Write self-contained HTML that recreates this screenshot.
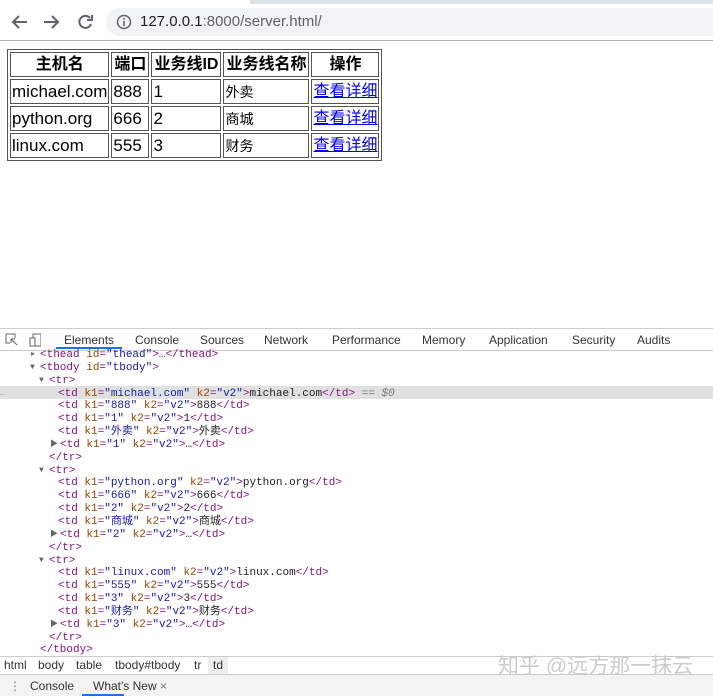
<!DOCTYPE html>
<html><head><meta charset="utf-8"><style>
*{margin:0;padding:0;box-sizing:border-box}
body{width:713px;height:696px;overflow:hidden;background:#fff;font-family:"Liberation Sans","Noto Sans CJK SC",sans-serif;position:relative}
.abs{position:absolute}
table{position:absolute;left:7px;top:49px;border:1px solid #555;border-spacing:2px;font-size:17px;color:#000}
td,th{border:1px solid #555;padding:0 1px;height:25px;white-space:nowrap;line-height:20px}
th{font-weight:bold;text-align:center;font-size:16px;padding:0 2px}
a{color:#0000ee;text-decoration:underline;font-size:16px}
.cj{font-size:14px}
.code{position:absolute;left:0;top:349px;width:713px;font-family:"Liberation Mono","Noto Sans CJK SC",monospace;font-size:11px;line-height:12.85px;color:#881280}
.code div{white-space:pre;height:12.85px;position:relative}
.n{color:#994500}.v{color:#1a1aa6}.t{color:#222}
.tri{position:absolute;font-size:8px;color:#666}
.tabs span{position:absolute;top:333px;font-size:12px;color:#333}
</style></head><body>
<div class="abs" style="left:250px;top:0;width:463px;height:4px;background:#dee1e6"></div>
<div class="abs" style="left:106px;top:8px;width:607px;height:28px;background:#f1f3f4;border-radius:14px 0 0 14px"></div>
<svg class="abs" style="left:8px;top:10px" width="90" height="24" viewBox="0 0 90 24" fill="none" stroke="#5f6368" stroke-width="2">
<path d="M19 12H5M11 6l-6 6 6 6"/><path d="M36 12h14M44 6l6 6-6 6"/><path d="M82 8a6 6 0 1 0 1 6"/><path d="M84 5v5h-5"/></svg>
<svg class="abs" style="left:116px;top:14px" width="16" height="16" viewBox="0 0 16 16"><circle cx="8" cy="8" r="6.5" fill="none" stroke="#5f6368" stroke-width="1.5"/><rect x="7.2" y="7" width="1.6" height="5" fill="#5f6368"/><rect x="7.2" y="4" width="1.6" height="1.6" fill="#5f6368"/></svg>
<div class="abs" style="left:140px;top:13px;font-size:15px;color:#202124">127.0.0.1<span style="color:#5f6368">:8000/server.html/</span></div>
<div class="abs" style="left:0;top:40px;width:713px;height:1px;background:#b0b0b0"></div>

<table>
<tr><th>主机名</th><th>端口</th><th>业务线ID</th><th>业务线名称</th><th>操作</th></tr>
<tr><td>michael.com</td><td>888</td><td>1</td><td class="cj">外卖</td><td><a>查看详细</a></td></tr>
<tr><td>python.org</td><td>666</td><td>2</td><td class="cj">商城</td><td><a>查看详细</a></td></tr>
<tr><td>linux.com</td><td>555</td><td>3</td><td class="cj">财务</td><td><a>查看详细</a></td></tr>
</table>

<div class="abs" style="left:0;top:328px;width:713px;height:1px;background:#ccc"></div>
<div class="abs" style="left:0;top:329px;width:713px;height:22px;background:#fff;border-bottom:1px solid #ccc"></div>
<svg class="abs" style="left:5px;top:333px" width="36" height="14"><path d="M1 1h9v4M1 1v9h4M6 6l6 6M6 6h4M6 6v4" stroke="#666" fill="none"/><rect x="28" y="1" width="8" height="12" fill="none" stroke="#666"/><rect x="25" y="5" width="5" height="8" fill="#fff" stroke="#666"/></svg>
<div class="tabs">
<span style="left:64px">Elements</span><span style="left:135px">Console</span><span style="left:200px">Sources</span><span style="left:264px">Network</span><span style="left:332px">Performance</span><span style="left:422px">Memory</span><span style="left:489px">Application</span><span style="left:572px">Security</span><span style="left:637px">Audits</span>
</div>
<div class="abs" style="left:56px;top:347px;width:66px;height:2px;background:#1a73e8"></div>

<div class="abs" style="left:0;top:386px;width:713px;height:13px;background:#e0e0e0"></div>
<div class="code">
<div style="left:40px"><span class="tri" style="left:-9px">▸</span>&lt;thead <span class="n">id</span>=<span class="v">"thead"</span>&gt;…&lt;/thead&gt;</div>
<div style="left:40px"><span class="tri" style="left:-10px">▼</span>&lt;tbody <span class="n">id</span>=<span class="v">"tbody"</span>&gt;</div>
<div style="left:49px"><span class="tri" style="left:-10px">▼</span>&lt;tr&gt;</div>
<div style="left:58px"><span class="tri" style="left:-58px;color:#888">…</span>&lt;td <span class="n">k1</span>=<span class="v">"michael.com"</span> <span class="n">k2</span>=<span class="v">"v2"</span>&gt;<span class="t">michael.com</span>&lt;/td&gt; <i style="color:#777">== $0</i></div>
<div style="left:58px">&lt;td <span class="n">k1</span>=<span class="v">"888"</span> <span class="n">k2</span>=<span class="v">"v2"</span>&gt;<span class="t">888</span>&lt;/td&gt;</div>
<div style="left:58px">&lt;td <span class="n">k1</span>=<span class="v">"1"</span> <span class="n">k2</span>=<span class="v">"v2"</span>&gt;<span class="t">1</span>&lt;/td&gt;</div>
<div style="left:58px">&lt;td <span class="n">k1</span>=<span class="v">"外卖"</span> <span class="n">k2</span>=<span class="v">"v2"</span>&gt;<span class="t">外卖</span>&lt;/td&gt;</div>
<div style="left:60px"><span class="tri" style="left:-10px">▶</span>&lt;td <span class="n">k1</span>=<span class="v">"1"</span> <span class="n">k2</span>=<span class="v">"v2"</span>&gt;<span class="t">…</span>&lt;/td&gt;</div>
<div style="left:49px">&lt;/tr&gt;</div>
<div style="left:49px"><span class="tri" style="left:-10px">▼</span>&lt;tr&gt;</div>
<div style="left:58px">&lt;td <span class="n">k1</span>=<span class="v">"python.org"</span> <span class="n">k2</span>=<span class="v">"v2"</span>&gt;<span class="t">python.org</span>&lt;/td&gt;</div>
<div style="left:58px">&lt;td <span class="n">k1</span>=<span class="v">"666"</span> <span class="n">k2</span>=<span class="v">"v2"</span>&gt;<span class="t">666</span>&lt;/td&gt;</div>
<div style="left:58px">&lt;td <span class="n">k1</span>=<span class="v">"2"</span> <span class="n">k2</span>=<span class="v">"v2"</span>&gt;<span class="t">2</span>&lt;/td&gt;</div>
<div style="left:58px">&lt;td <span class="n">k1</span>=<span class="v">"商城"</span> <span class="n">k2</span>=<span class="v">"v2"</span>&gt;<span class="t">商城</span>&lt;/td&gt;</div>
<div style="left:60px"><span class="tri" style="left:-10px">▶</span>&lt;td <span class="n">k1</span>=<span class="v">"2"</span> <span class="n">k2</span>=<span class="v">"v2"</span>&gt;<span class="t">…</span>&lt;/td&gt;</div>
<div style="left:49px">&lt;/tr&gt;</div>
<div style="left:49px"><span class="tri" style="left:-10px">▼</span>&lt;tr&gt;</div>
<div style="left:58px">&lt;td <span class="n">k1</span>=<span class="v">"linux.com"</span> <span class="n">k2</span>=<span class="v">"v2"</span>&gt;<span class="t">linux.com</span>&lt;/td&gt;</div>
<div style="left:58px">&lt;td <span class="n">k1</span>=<span class="v">"555"</span> <span class="n">k2</span>=<span class="v">"v2"</span>&gt;<span class="t">555</span>&lt;/td&gt;</div>
<div style="left:58px">&lt;td <span class="n">k1</span>=<span class="v">"3"</span> <span class="n">k2</span>=<span class="v">"v2"</span>&gt;<span class="t">3</span>&lt;/td&gt;</div>
<div style="left:58px">&lt;td <span class="n">k1</span>=<span class="v">"财务"</span> <span class="n">k2</span>=<span class="v">"v2"</span>&gt;<span class="t">财务</span>&lt;/td&gt;</div>
<div style="left:60px"><span class="tri" style="left:-10px">▶</span>&lt;td <span class="n">k1</span>=<span class="v">"3"</span> <span class="n">k2</span>=<span class="v">"v2"</span>&gt;<span class="t">…</span>&lt;/td&gt;</div>
<div style="left:49px">&lt;/tr&gt;</div>
<div style="left:40px">&lt;/tbody&gt;</div>
</div>

<div class="abs" style="left:0;top:656px;width:713px;height:1px;background:#ccc"></div>
<div class="abs" style="left:0;top:657px;width:713px;height:17px;font-size:12px;color:#333;line-height:17px;background:#fff">
<span class="abs" style="left:4px">html</span><span class="abs" style="left:38px">body</span><span class="abs" style="left:76px">table</span><span class="abs" style="left:115px">tbody#tbody</span><span class="abs" style="left:194px">tr</span><span class="abs" style="left:208px;width:20px;background:#eee;padding-left:5px">td</span>
</div>
<div class="abs" style="left:498px;top:650px;font-size:21px;color:#ccc">知乎 @远方那一抹云</div>
<div class="abs" style="left:0;top:674px;width:713px;height:22px;background:#f3f3f3;border-top:1px solid #ccc;font-size:12px;color:#333;line-height:22px">
<span class="abs" style="left:9px;color:#777">⋮</span><span class="abs" style="left:30px">Console</span><span class="abs" style="left:93px">What's New <span style="color:#777">×</span></span>
<div class="abs" style="left:82px;top:19px;width:42px;height:2px;background:#1a73e8"></div>
</div>
</body></html>
